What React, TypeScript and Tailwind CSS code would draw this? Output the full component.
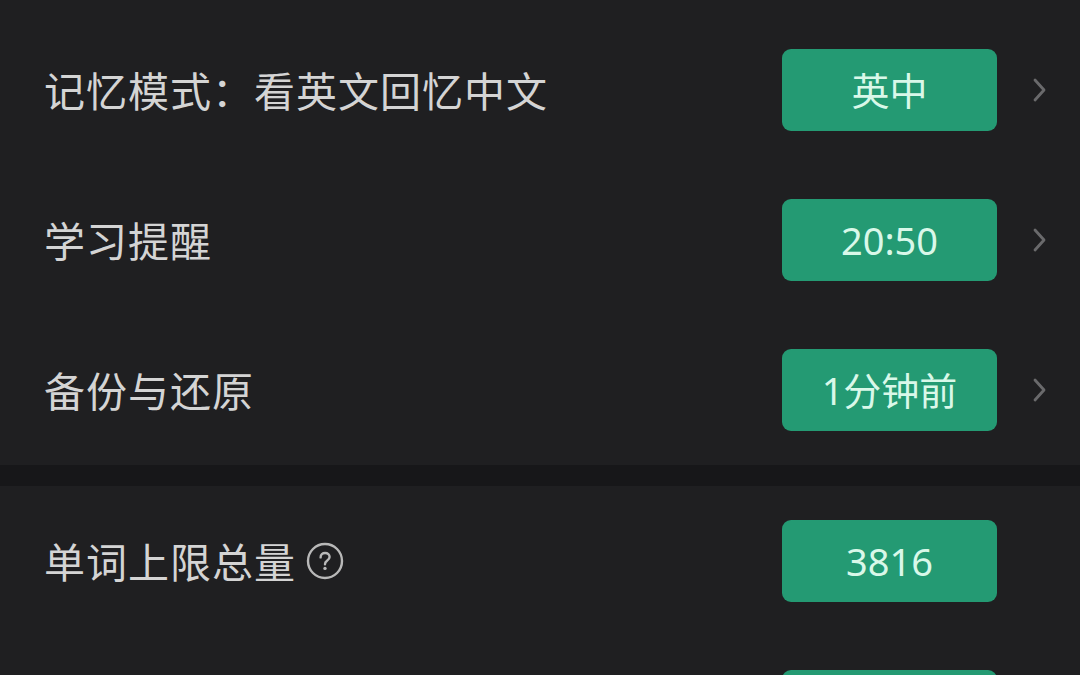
import React from 'react';

const font = { fontFamily: '"Noto Sans CJK SC", "Noto Sans", sans-serif' };
const btnFont = { fontFamily: '"Noto Sans", "Noto Sans CJK SC", sans-serif' };

const Chevron: React.FC = () => (
  <svg width="18" height="28" viewBox="0 0 18 28" fill="none">
    <path d="M5 4 L14 14 L5 24" stroke="#6a6a6c" strokeWidth="2.8" strokeLinecap="round" strokeLinejoin="round" />
  </svg>
);

const HelpIcon: React.FC = () => (
  <svg width="38" height="38" viewBox="0 0 38 38" fill="none">
    <circle cx="19" cy="19" r="17" stroke="#b8b8b8" strokeWidth="2.4" />
    <path d="M14.6 15.4 C14.6 12.6 16.6 11 19.1 11 C21.7 11 23.6 12.7 23.6 15 C23.6 17.1 22.1 18 20.8 18.9 C19.6 19.7 19 20.4 19 22.2" stroke="#b8b8b8" strokeWidth="2.4" strokeLinecap="round" fill="none" />
    <circle cx="19" cy="26.4" r="1.7" fill="#b8b8b8" />
  </svg>
);

interface RowProps {
  label: string;
  value: string;
  help?: boolean;
  arrow?: boolean;
}

const Row: React.FC<RowProps> = ({ label, value, help, arrow = true }) => (
  <div className="flex items-center h-[150px] pl-[44px]">
    <div className="flex-1 flex items-center gap-[10px] text-[41px] text-[#d4d4d4] tracking-[1px]">
      <span>{label}</span>
      {help && <HelpIcon />}
    </div>
    <div
      className="w-[215px] h-[82px] rounded-[9px] bg-[#249a73] flex items-center justify-center text-[38px] text-[#d9f8e9]"
      style={btnFont}
    >
      {value}
    </div>
    <div className="w-[83px] flex justify-center">
      {arrow && <Chevron />}
    </div>
  </div>
);

export default function App() {
  return (
    <div className="w-[1080px] h-[675px] overflow-hidden bg-[#1f1f21]" style={font}>
      <div className="pt-[15px]">
        <Row label="记忆模式：看英文回忆中文" value="英中" />
        <Row label="学习提醒" value="20:50" />
        <Row label="备份与还原" value="1分钟前" />
      </div>
      <div className="h-[21px] bg-[#171719]" />
      <div>
        <Row label="单词上限总量" value="3816" help arrow={false} />
        <Row label="" value="" arrow={false} />
      </div>
    </div>
  );
}
